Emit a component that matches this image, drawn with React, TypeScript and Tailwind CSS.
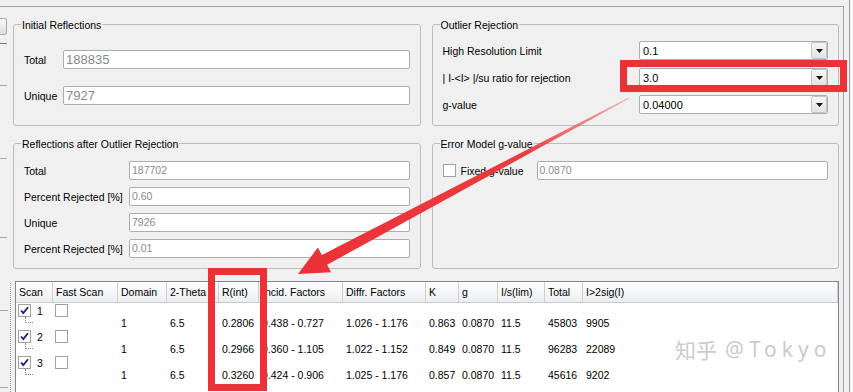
import React from "react";

const font = "font-['Liberation_Sans',Arial,sans-serif]";

const Group: React.FC<{ title: string; className?: string; children?: React.ReactNode }> = ({
  title,
  className,
  children,
}) => (
  <div className={`relative border border-[#bcbcbc] rounded-[3px] ${className ?? ""}`}>
    <span className="absolute -top-[7px] left-[7px] bg-[#f0f0f0] px-[1px] leading-[14px]">{title}</span>
    {children}
  </div>
);

const TextBox: React.FC<{ value: string; className?: string; big?: boolean }> = ({ value, className, big }) => (
  <div
    className={`h-[19px] bg-white border border-[#abadb3] rounded-[2px] flex items-center px-[2px] pt-px text-[#8a8a8a] ${
      big ? "text-[13px]" : "text-[10.5px]"
    } ${className ?? ""}`}
  >
    {value}
  </div>
);

const Combo: React.FC<{ value: string }> = ({ value }) => (
  <div className="ml-auto w-[189px] h-[19px] bg-white border border-[#abadb3] rounded-[2px] flex items-center">
    <span className="flex-1 px-[3px] pt-px text-[11px]">{value}</span>
    <div className="w-[16px] h-[17px] border border-[#c4c4c4] rounded-[2px] bg-gradient-to-b from-[#f7f7f7] to-[#e3e3e3] flex items-center justify-center">
      <svg width="7" height="4" viewBox="0 0 7 4">
        <path d="M0 0h7L3.5 4z" fill="#111" />
      </svg>
    </div>
  </div>
);

const CheckBox: React.FC<{ checked?: boolean }> = ({ checked }) => (
  <div className="w-[13px] h-[13px] bg-white border border-[#a0a0a0] flex items-center justify-center shrink-0">
    {checked && (
      <svg width="9" height="9" viewBox="0 0 9 9">
        <path d="M1 4.5l2.3 2.6L8 1.2" stroke="#1b1b86" strokeWidth="1.8" fill="none" />
      </svg>
    )}
  </div>
);

const columns = [
  { h: "Scan", w: "w-[37px]" },
  { h: "Fast Scan", w: "w-[65px]" },
  { h: "Domain", w: "w-[49px]" },
  { h: "2-Theta", w: "w-[52px]" },
  { h: "R(int)", w: "w-[40px]" },
  { h: "Incid. Factors", w: "w-[84px]" },
  { h: "Diffr. Factors", w: "w-[83px]" },
  { h: "K", w: "w-[33px]" },
  { h: "g", w: "w-[39px]" },
  { h: "I/s(lim)", w: "w-[47px]" },
  { h: "Total", w: "w-[38px]" },
  { h: "I>2sig(I)", w: "flex-1" },
];

const rows = [
  { n: "1", d: ["1", "6.5", "0.2806", "0.438 - 0.727", "1.026 - 1.176", "0.863", "0.0870", "11.5", "45803", "9905"] },
  { n: "2", d: ["1", "6.5", "0.2966", "0.360 - 1.105", "1.022 - 1.152", "0.849", "0.0870", "11.5", "96283", "22089"] },
  { n: "3", d: ["1", "6.5", "0.3260", "0.424 - 0.906", "1.025 - 1.176", "0.857", "0.0870", "11.5", "45616", "9202"] },
];

export default function App() {
  return (
    <div className={`relative w-[853px] h-[392px] overflow-hidden bg-[#f0f0f0] text-black text-[10.5px] flex ${font}`}>
      {/* main panel */}
      <div className="w-[844px] mt-[6px] border-t border-r border-[#a3a3a3] flex">
        {/* left stub of neighbouring panel */}
        <div className="w-[13px] flex flex-col">
          <div className="mt-[11px] w-[7px] h-[17px] border border-l-0 border-[#a8a8a8] rounded-r-[3px] bg-gradient-to-b from-[#fafafa] to-[#dedede]" />
          <div className="mt-[8px] w-[7px] h-px bg-[#7a7a7a]" />
          <div className="mt-[41px] w-[7px] h-px bg-[#a8a8a8]" />
          <div className="mt-[72px] w-[7px] h-px bg-[#a8a8a8]" />
          <div className="mt-[78px] w-[7px] h-px bg-[#a8a8a8]" />
          <div className="mt-[45px] flex-1 flex">
            <div className="w-[10px] flex flex-col">
              <div className="mt-[27px] w-[8px] h-px bg-[#a8a8a8]" />
              <div className="mt-[76px] w-[8px] h-px bg-[#a8a8a8]" />
            </div>
            <div className="w-0 border-l border-dotted border-[#a0a0a0]" />
          </div>
        </div>

        {/* content */}
        <div className="w-[826px] flex flex-col">
          <div className="mt-[17px] flex gap-[11px]">
            <Group title="Initial Reflections" className="w-[408px] h-[102px]">
              <div className="pt-[25px] pl-[10px] pr-[10px] flex flex-col gap-[17px]">
                <div className="flex items-center h-[19px]">
                  <span className="w-[39px] pt-[2px]">Total</span>
                  <TextBox value="188835" big className="flex-1" />
                </div>
                <div className="flex items-center h-[19px]">
                  <span className="w-[39px] pt-[2px]">Unique</span>
                  <TextBox value="7927" big className="flex-1" />
                </div>
              </div>
            </Group>
            <Group title="Outlier Rejection" className="w-[408px] h-[102px]">
              <div className="pt-[16px] pl-[10px] pr-[10px] flex flex-col gap-[8px]">
                <div className="flex items-center h-[19px]">
                  <span className="pt-[2px]">High Resolution Limit</span>
                  <Combo value="0.1" />
                </div>
                <div className="flex items-center h-[19px]">
                  <span className="pt-[2px]">| I-&lt;I&gt; |/su ratio for rejection</span>
                  <Combo value="3.0" />
                </div>
                <div className="flex items-center h-[19px]">
                  <span className="pt-[2px]">g-value</span>
                  <Combo value="0.04000" />
                </div>
              </div>
            </Group>
          </div>

          <div className="mt-[17px] flex gap-[11px]">
            <Group title="Reflections after Outlier Rejection" className="w-[408px] h-[126px]">
              <div className="pt-[17px] pl-[10px] pr-[10px] flex flex-col gap-[7px]">
                {[
                  ["Total", "187702"],
                  ["Percent Rejected [%]", "0.60"],
                  ["Unique", "7926"],
                  ["Percent Rejected [%]", "0.01"],
                ].map(([l, v], i) => (
                  <div key={i} className="flex items-center h-[19px]">
                    <span className="w-[105px] pt-[2px]">{l}</span>
                    <TextBox value={v} className="flex-1" />
                  </div>
                ))}
              </div>
            </Group>
            <Group title="Error Model g-value" className="w-[408px] h-[126px]">
              <div className="pt-[17px] pl-[10px] pr-[10px] flex items-center h-[36px]">
                <CheckBox />
                <span className="ml-[5px] w-[76px] pt-[2px]">Fixed g-value</span>
                <TextBox value="0.0870" className="flex-1" />
              </div>
            </Group>
          </div>

          {/* scan table */}
          <div className="mt-[12px] ml-[2px] w-[824px] flex-1 border border-b-0 border-[#828790] bg-white flex flex-col">
            <div className="h-[21px] flex border-b border-[#c9c9c9]">
              {columns.map((c) => (
                <div
                  key={c.h}
                  className={`${c.w} h-full border-r border-[#cfcfcf] bg-gradient-to-b from-white to-[#eceef1] flex items-center pl-[3px] pt-[2px] whitespace-nowrap overflow-hidden`}
                >
                  {c.h}
                </div>
              ))}
            </div>
            {rows.map((r) => (
              <div key={r.n} className="flex flex-col">
                <div className="h-[13px] mt-[1px] flex items-center">
                  <div className="w-[37px] pl-[2px] flex items-center gap-[6px]">
                    <CheckBox checked />
                    <span className="pt-[2px]">{r.n}</span>
                  </div>
                  <div className="w-[65px] pl-[2px] flex items-center">
                    <CheckBox />
                  </div>
                </div>
                <div className="h-[12px] flex items-center">
                  <div className="w-[102px] h-full">
                    <div className="ml-[9px] w-[8px] h-[6px] border-l border-b border-dotted border-[#8a8a8a]" />
                  </div>
                  {r.d.map((v, i) => (
                    <div key={i} className={`${columns[i + 2].w} pl-[3px] pt-[2px] whitespace-nowrap`}>
                      {v}
                    </div>
                  ))}
                </div>
              </div>
            ))}
          </div>
        </div>
      </div>

      {/* right edge */}
      <div className="w-[9px] flex">
        <div className="w-[5px]" />
        <div className="w-px bg-[#9a9a9a]" />
        <div className="flex-1 bg-[#f7f7f7]" />
      </div>

      {/* annotations */}
      <div className="absolute left-[620px] top-[60px] w-[227px] h-[32px] border-[7px] border-[#ec3237]" />
      <div className="absolute left-[208px] top-[268px] w-[59px] h-[123px] border-[7px] border-[#ec3237]" />
      <svg className="absolute left-0 top-0" width="853" height="392" viewBox="0 0 853 392">
        <defs>
          <linearGradient id="arr" x1="629" y1="98" x2="330" y2="260" gradientUnits="userSpaceOnUse">
            <stop offset="0" stopColor="#ec3237" stopOpacity="0.3" />
            <stop offset="0.35" stopColor="#ec3237" stopOpacity="0.95" />
            <stop offset="1" stopColor="#ec3237" />
          </linearGradient>
        </defs>
        <polygon
          points="629.3,98.5 628.7,97.5 321.9,255 317.9,247.5 298,274 331.1,272.3 327.1,264.8"
          fill="url(#arr)"
        />
      </svg>
      <div className="absolute left-[675px] top-[336px] flex items-center text-[#cbcbcb] text-[21px] leading-[26px] font-['Noto_Sans_CJK_SC',sans-serif]">
        <span>知乎</span>
        <span className="ml-[8px] tracking-[5px] font-['Noto_Sans',sans-serif]">@Tokyo</span>
      </div>
    </div>
  );
}
